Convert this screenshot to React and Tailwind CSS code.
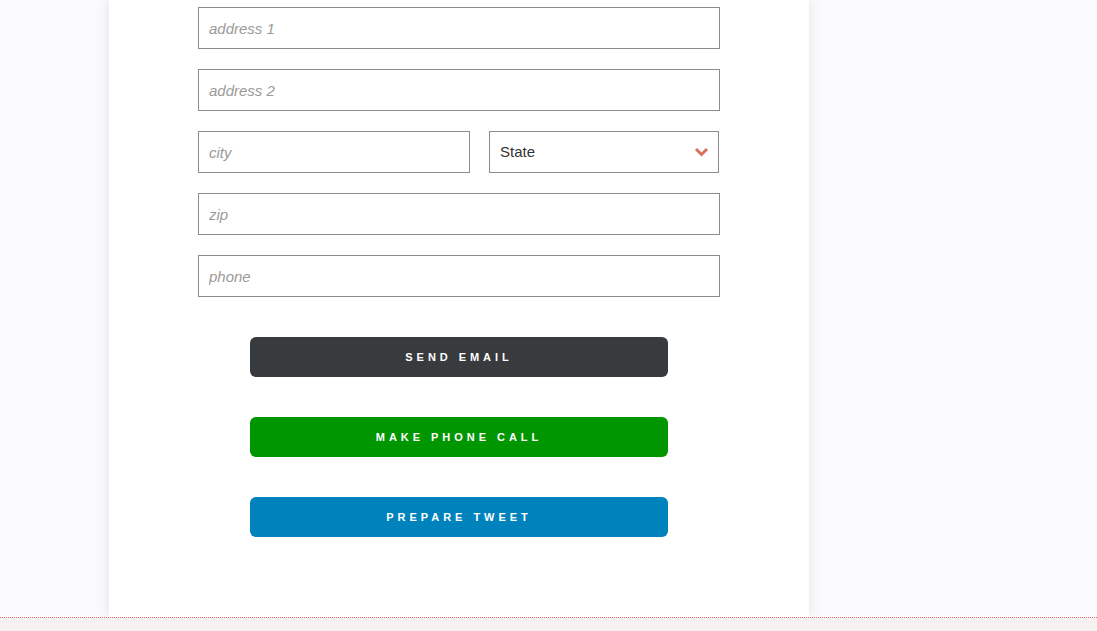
export default function App() {
  const inputCls =
    "h-[42px] w-full border border-[#8c8c8c] bg-white px-[10px] text-[15px] text-[#333] placeholder:italic placeholder:text-[#9a9a9a] outline-none";
  const btnCls =
    "h-10 w-[418px] rounded-[6px] text-[11px] font-bold uppercase tracking-[0.36em] text-white";

  return (
    <div
      className="flex min-h-[631px] flex-col bg-[#fbfbfd]"
      style={{ fontFamily: '"Liberation Sans", Arial, sans-serif' }}
    >
      <div className="flex flex-1">
        <div className="ml-[109px] w-[700px] bg-white pb-[80px] pl-[89px] pr-[89px] pt-[7px] shadow-[0_0_14px_rgba(0,0,0,0.1)]">
          <div className="flex flex-col gap-5">
            <input className={inputCls} placeholder="address 1" />
            <input className={inputCls} placeholder="address 2" />
            <div className="flex gap-[19px]">
              <input className={`${inputCls} !w-[272px]`} placeholder="city" />
              <div className="relative flex h-[42px] w-[230px] items-center border border-[#8c8c8c] px-[10px] text-[15px] text-[#333]">
                State
                <svg
                  className="absolute right-[9px] top-[15px]"
                  width="15"
                  height="10"
                  viewBox="0 0 15 10"
                >
                  <path
                    d="M2 2 L7.5 7.5 L13 2"
                    fill="none"
                    stroke="#d9705c"
                    strokeWidth="3"
                  />
                </svg>
              </div>
            </div>
            <input className={inputCls} placeholder="zip" />
            <input className={inputCls} placeholder="phone" />
          </div>
          <div className="mt-10 flex flex-col items-center gap-10">
            <button className={`${btnCls} bg-[#383b3e]`}>Send Email</button>
            <button className={`${btnCls} bg-[#009600]`}>Make Phone Call</button>
            <button className={`${btnCls} bg-[#0083bd]`}>Prepare Tweet</button>
          </div>
        </div>
      </div>
      <div className="h-[14px] border-t border-dotted border-[#e46a6a] bg-[#f8f1f1]" />
    </div>
  );
}
